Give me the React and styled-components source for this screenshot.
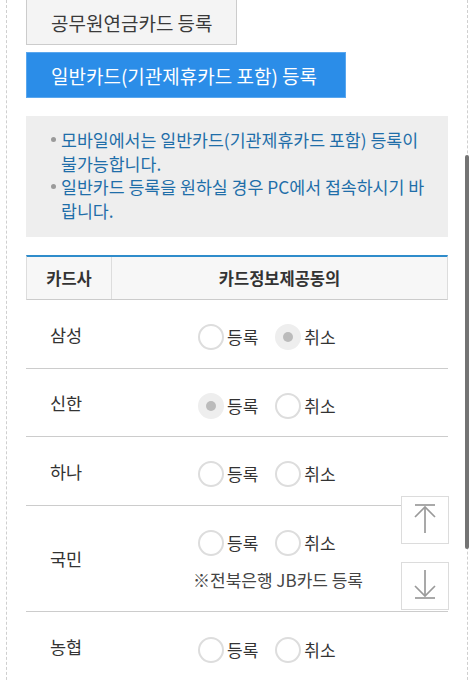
import React from "react";
import styled, { createGlobalStyle } from "styled-components";

const GlobalStyle = createGlobalStyle`
  html, body {
    margin: 0;
    padding: 0;
    background: #ffffff;
    overflow: hidden;
  }
  body {
    font-family: "Noto Sans CJK KR", "Noto Sans", sans-serif;
    color: #333;
  }
  * { box-sizing: border-box; }
`;

const Page = styled.div`
  margin-left: 6px;
  width: 462px;
  min-height: 700px;
  border-left: 1px dashed #cfcfcf;
  border-right: 1px dashed #cfcfcf;
  padding: 0 19px;
  display: flex;
  flex-direction: column;
`;

const RegButton = styled.button`
  display: flex;
  align-items: center;
  height: 46px;
  width: ${(p) => p.$w}px;
  padding: 0 0 0 24px;
  margin: ${(p) => (p.$first ? "-1px 0 0" : "7px 0 0")};
  font-family: inherit;
  font-size: 19px;
  line-height: 1;
  white-space: nowrap;
  border: 1px solid ${(p) => (p.$primary ? "#5aa7ee" : "#cccccc")};
  background: ${(p) => (p.$primary ? "#2b8de8" : "#f4f4f4")};
  color: ${(p) => (p.$primary ? "#ffffff" : "#3a3a3a")};
  cursor: pointer;
`;

const InfoBox = styled.ul`
  list-style: none;
  margin: 18px 0 0;
  padding: 12px 10px 15px 25px;
  background: #eeeeee;
`;

const InfoItem = styled.li`
  position: relative;
  padding-left: 10px;
  font-size: 17.3px;
  line-height: 23.5px;
  color: #1f6ea9;
  white-space: nowrap;

  &::before {
    content: "";
    position: absolute;
    left: 0;
    top: 9px;
    width: 5px;
    height: 5px;
    border-radius: 50%;
    background: #9a9a9a;
  }
`;

const Table = styled.div`
  margin-top: 18px;
  display: flex;
  flex-direction: column;
`;

const HeadRow = styled.div`
  display: grid;
  grid-template-columns: 84px 1fr;
  height: 45px;
  border-top: 2px solid #2f8ccb;
  border-bottom: 1px solid #cccccc;
  border-left: 1px solid #dddddd;
  border-right: 1px solid #dddddd;
  background: #f7f7f7;
`;

const HeadCell = styled.div`
  display: flex;
  align-items: center;
  justify-content: center;
  font-size: 16.5px;
  font-weight: 700;
  color: #333;
  border-left: ${(p) => (p.$divider ? "1px solid #dddddd" : "none")};
`;

const Row = styled.div`
  display: grid;
  grid-template-columns: 84px 1fr;
  height: ${(p) => p.$h}px;
  border-bottom: ${(p) => (p.$last ? "none" : "1px solid #cccccc")};
`;

const BankName = styled.div`
  display: flex;
  align-items: center;
  padding-left: 24px;
  font-size: 17.5px;
  color: #333;
`;

const ConsentCell = styled.div`
  display: flex;
  flex-direction: column;
  justify-content: center;
  padding-left: 83px;
  padding-top: ${(p) => (p.$stack ? 4 : 6)}px;
`;

const RadioGroup = styled.div`
  display: flex;
  align-items: center;
  gap: 17px;
  margin-left: 5px;
`;

const RadioLabel = styled.label`
  display: flex;
  align-items: center;
  font-size: 17px;
  color: #333;
  line-height: 26px;
  cursor: pointer;
`;

const Circle = styled.span`
  width: 26px;
  height: 26px;
  border-radius: 50%;
  margin-right: 3px;
  display: flex;
  align-items: center;
  justify-content: center;
  border: 2px solid ${(p) => (p.$on ? "#eeeeee" : "#dddddd")};
  background: ${(p) => (p.$on ? "#eeeeee" : "#ffffff")};

  &::after {
    content: "";
    width: 10px;
    height: 10px;
    border-radius: 50%;
    background: ${(p) => (p.$on ? "#bbbbbb" : "transparent")};
  }
`;

const Note = styled.div`
  margin-top: 13px;
  font-size: 17px;
  line-height: 22px;
  color: #444;
  white-space: nowrap;
`;

const ScrollThumb = styled.div`
  position: fixed;
  left: 465px;
  top: 155px;
  width: 4px;
  height: 394px;
  border-radius: 2px;
  background: #747474;
`;

const FloatBtn = styled.button`
  position: fixed;
  left: 401px;
  top: ${(p) => p.$top}px;
  width: 48px;
  height: 48px;
  padding: 0;
  border: 1px solid #dcdcdc;
  background: #ffffff;
  display: flex;
  align-items: center;
  justify-content: center;
  cursor: pointer;
`;

const Radio = ({ label, on }) => (
  <RadioLabel>
    <Circle $on={on} />
    {label}
  </RadioLabel>
);

const UpIcon = () => (
  <svg width="46" height="46" viewBox="0 0 46 46" fill="none" stroke="#9a9a9a" strokeWidth="1.7" strokeLinecap="butt">
    <line x1="13" y1="8" x2="33" y2="8" />
    <polyline points="13,20 23,10 33,20" />
    <line x1="23" y1="10" x2="23" y2="36" />
  </svg>
);

const DownIcon = () => (
  <svg width="46" height="46" viewBox="0 0 46 46" fill="none" stroke="#9a9a9a" strokeWidth="1.7" strokeLinecap="butt">
    <line x1="23" y1="7" x2="23" y2="33" />
    <polyline points="13,23 23,33 33,23" />
    <line x1="13" y1="35" x2="33" y2="35" />
  </svg>
);

const banks = [
  { name: "삼성", h: 69, sel: "cancel" },
  { name: "신한", h: 68, sel: "reg" },
  { name: "하나", h: 69, sel: null },
  { name: "국민", h: 106, sel: null, note: "※전북은행 JB카드 등록" },
  { name: "농협", h: 69, sel: null, last: true },
];

export default function App() {
  return (
    <>
      <GlobalStyle />
      <Page>
        <RegButton $first $w={211}>공무원연금카드 등록</RegButton>
        <RegButton $primary $w={320}>일반카드(기관제휴카드 포함) 등록</RegButton>
        <InfoBox>
          <InfoItem>
            모바일에서는 일반카드(기관제휴카드 포함) 등록이
            <br />
            불가능합니다.
          </InfoItem>
          <InfoItem>
            일반카드 등록을 원하실 경우 PC에서 접속하시기 바
            <br />
            랍니다.
          </InfoItem>
        </InfoBox>
        <Table>
          <HeadRow>
            <HeadCell>카드사</HeadCell>
            <HeadCell $divider>카드정보제공동의</HeadCell>
          </HeadRow>
          {banks.map((b) => (
            <Row key={b.name} $h={b.h} $last={b.last}>
              <BankName>{b.name}</BankName>
              <ConsentCell $stack={!!b.note}>
                <RadioGroup>
                  <Radio label="등록" on={b.sel === "reg"} />
                  <Radio label="취소" on={b.sel === "cancel"} />
                </RadioGroup>
                {b.note && <Note>{b.note}</Note>}
              </ConsentCell>
            </Row>
          ))}
        </Table>
      </Page>
      <ScrollThumb />
      <FloatBtn $top={496} aria-label="맨 위로">
        <UpIcon />
      </FloatBtn>
      <FloatBtn $top={562} aria-label="맨 아래로">
        <DownIcon />
      </FloatBtn>
    </>
  );
}
